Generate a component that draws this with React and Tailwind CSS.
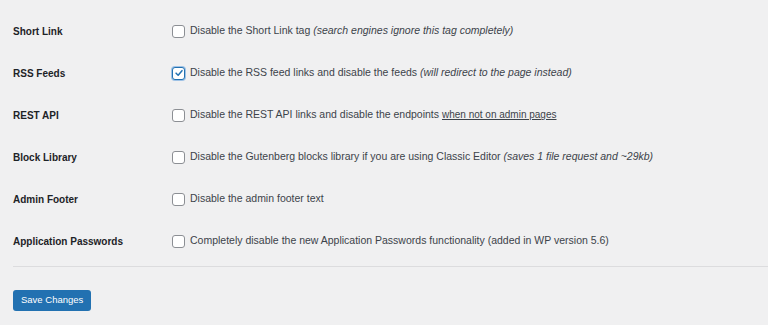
const rows = [
  {
    label: 'Short Link',
    text: 'Disable the Short Link tag',
    note: '(search engines ignore this tag completely)',
  },
  {
    label: 'RSS Feeds',
    text: 'Disable the RSS feed links and disable the feeds',
    note: '(will redirect to the page instead)',
    checked: true,
  },
  {
    label: 'REST API',
    text: 'Disable the REST API links and disable the endpoints',
    link: 'when not on admin pages',
  },
  {
    label: 'Block Library',
    text: 'Disable the Gutenberg blocks library if you are using Classic Editor',
    note: '(saves 1 file request and ~29kb)',
  },
  {
    label: 'Admin Footer',
    text: 'Disable the admin footer text',
  },
  {
    label: 'Application Passwords',
    text: 'Completely disable the new Application Passwords functionality (added in WP version 5.6)',
  },
];

const Checkbox = ({ checked }) => (
  <span
    className={
      checked
        ? 'flex items-center justify-center h-[13px] w-[13px] rounded-[3px] border border-[#2271b1] bg-white shadow-[0_0_0_1px_#9ec2e6]'
        : 'flex items-center justify-center h-[13px] w-[13px] rounded-[3px] border border-[#8c8f94] bg-white'
    }
  >
    {checked && (
      <svg viewBox="0 0 12 12" className="h-[10px] w-[10px]">
        <path d="M2.5 6.2 L5 8.6 L9.6 3.2" fill="none" stroke="#2271b1" strokeWidth="1.8" strokeLinecap="round" strokeLinejoin="round" />
      </svg>
    )}
  </span>
);

export default function App() {
  return (
    <div
      className="min-h-screen bg-[#f0f0f1] pl-[13px] text-[10.5px] text-[#3c434a]"
      style={{ fontFamily: '"Liberation Sans", Arial, sans-serif' }}
    >
      <div className="pt-[10px]">
        {rows.map((row) => (
          <div key={row.label} className="flex h-[42px] items-center">
            <div className="w-[159px] text-[10px] font-bold text-[#1d2327]">{row.label}</div>
            <div className="flex items-center gap-[5px]">
              <Checkbox checked={row.checked} />
              <span>
                {row.text}
                {row.note && <i> {row.note}</i>}
                {row.link && (
                  <>
                    {' '}
                    <span className="text-[10px] underline">{row.link}</span>
                  </>
                )}
              </span>
            </div>
          </div>
        ))}
      </div>
      <div className="mt-[4px] border-t border-[#dcdcde]" />
      <div className="pt-[23px]">
        <button className="h-[21px] rounded-[3px] bg-[#2271b1] px-[8px] text-[9.5px] text-white">
          Save Changes
        </button>
      </div>
    </div>
  );
}
